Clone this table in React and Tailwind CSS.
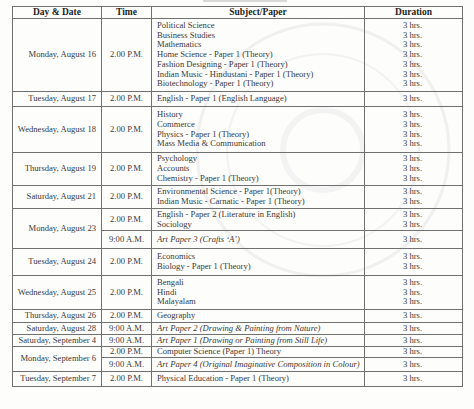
import React from "react";

const rows = [
  { day: "Monday, August 16", time: "2.00 P.M.", subjects: ["Political Science", "Business Studies", "Mathematics", "Home Science - Paper 1 (Theory)", "Fashion Designing - Paper 1 (Theory)", "Indian Music - Hindustani - Paper 1 (Theory)", "Biotechnology - Paper 1 (Theory)"] },
  { day: "Tuesday, August 17", time: "2.00 P.M.", subjects: ["English - Paper 1 (English Language)"] },
  { day: "Wednesday, August 18", time: "2.00 P.M.", subjects: ["History", "Commerce", "Physics - Paper 1 (Theory)", "Mass Media & Communication"] },
  { day: "Thursday, August 19", time: "2.00 P.M.", subjects: ["Psychology", "Accounts", "Chemistry - Paper 1 (Theory)"] },
  { day: "Saturday, August 21", time: "2.00 P.M.", subjects: ["Environmental Science - Paper 1(Theory)", "Indian Music - Carnatic - Paper 1 (Theory)"] },
  { day: "Monday, August 23", span: 2, time: "2.00 P.M.", subjects: ["English - Paper 2 (Literature in English)", "Sociology"] },
  { time: "9:00 A.M.", italic: true, subjects: ["Art Paper 3 (Crafts \u2018A\u2019)"] },
  { day: "Tuesday, August 24", time: "2.00 P.M.", subjects: ["Economics", "Biology - Paper 1 (Theory)"] },
  { day: "Wednesday, August 25", time: "2.00 P.M.", subjects: ["Bengali", "Hindi", "Malayalam"] },
  { day: "Thursday, August 26", time: "2.00 P.M.", subjects: ["Geography"] },
  { day: "Saturday, August 28", time: "9:00 A.M.", italic: true, subjects: ["Art Paper 2 (Drawing & Painting from Nature)"] },
  { day: "Saturday, September 4", time: "9:00 A.M.", italic: true, subjects: ["Art Paper 1 (Drawing or Painting from Still Life)"] },
  { day: "Monday, September 6", span: 2, time: "2.00 P.M.", subjects: ["Computer Science (Paper 1) Theory"] },
  { time: "9:00 A.M.", italic: true, subjects: ["Art Paper 4 (Original Imaginative Composition in Colour)"] },
  { day: "Tuesday, September 7", time: "2.00 P.M.", subjects: ["Physical Education - Paper 1 (Theory)"] },
];

const cell = "border-r border-b border-[#707070] flex items-center";
const head = "border-r border-b border-[#707070] flex items-center justify-center text-[9.5px] font-bold text-[#1f1f1f]";

export default function App() {
  return (
    <div className="relative h-[409px] w-[474px] overflow-hidden bg-[#fdfdfc] text-[#3a3a3a] font-['Liberation_Serif','Times_New_Roman',serif]">
      <div className="absolute left-[203px] top-0 h-[2px] w-[84px] bg-[#d8d8d8]" />
      <svg className="pointer-events-none absolute left-[193px] top-[20px]" width="260" height="260" viewBox="0 0 260 260">
        <circle cx="130" cy="130" r="126" fill="none" stroke="#f0f0f0" strokeWidth="3" />
        <circle cx="130" cy="130" r="96" fill="none" stroke="#f2f2f2" strokeWidth="2" />
        <circle cx="130" cy="130" r="40" fill="none" stroke="#f3f3f3" strokeWidth="6" />
      </svg>
      <div className="relative ml-[12px] mt-[6px] grid w-[451px] grid-cols-[89px_50px_213px_98px] grid-rows-[12px_73px_15px_46px_33px_23px_22px_18px_27px_34px_13px_12px_12px_11px_14px_15px] border-l border-t border-[#707070] text-[8.6px] leading-[9.7px]">
        <div className={head}>Day &amp; Date</div>
        <div className={head}>Time</div>
        <div className={head}>Subject/Paper</div>
        <div className={head}>Duration</div>
        {rows.map((r, i) => (
          <React.Fragment key={i}>
            {r.day && (
              <div className={`${cell} justify-end pr-[5px] ${r.span === 2 ? "row-span-2" : ""}`}>{r.day}</div>
            )}
            <div className={`${cell} justify-center`}>{r.time}</div>
            <div className={`${cell} pl-[5px] ${r.italic ? "italic" : ""}`}>
              <div>
                {r.subjects.map((s) => (
                  <div key={s} className="whitespace-nowrap">{s}</div>
                ))}
              </div>
            </div>
            <div className={`${cell} justify-center pr-[2px]`}>
              <div>
                {r.subjects.map((s) => (
                  <div key={s}>3 hrs.</div>
                ))}
              </div>
            </div>
          </React.Fragment>
        ))}
      </div>
    </div>
  );
}
